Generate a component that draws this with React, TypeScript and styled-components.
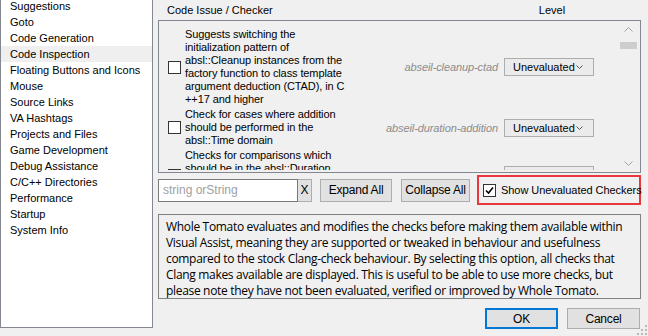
import React from 'react';
import styled, { createGlobalStyle } from 'styled-components';

const GlobalStyle = createGlobalStyle`
  html, body {
    margin: 0;
    padding: 0;
    background: #f0f0f0;
  }
  body {
    width: 648px;
    height: 336px;
    overflow: hidden;
    font-family: "Liberation Sans", Arial, sans-serif;
    font-size: 11px;
    color: #000;
  }
`;

const Page = styled.div`
  position: relative;
  display: flex;
  width: 648px;
  height: 336px;
  background: #f0f0f0;
`;

const NavList = styled.ul`
  list-style: none;
  margin: 0;
  padding: 0;
  width: 151px;
  height: 327px;
  flex: none;
  background: #fff;
  border: 1px solid #828790;
  border-top: none;
  overflow: hidden;
`;

const NavItems = styled.div`
  margin-top: -2px;
`;

const NavItem = styled.li<{ $active?: boolean }>`
  height: 16px;
  line-height: 16px;
  padding-left: 9px;
  white-space: nowrap;
  background: ${p => (p.$active ? '#efefef' : 'transparent')};
`;

const Main = styled.div`
  flex: 1;
  display: flex;
  flex-direction: column;
  padding: 0 7px 0 5px;
`;

const Header = styled.div`
  display: flex;
  align-items: center;
  height: 20px;
`;

const HeaderCell = styled.span<{ $width?: number }>`
  flex: ${p => (p.$width ? 'none' : '1')};
  width: ${p => (p.$width ? `${p.$width}px` : 'auto')};
  text-align: ${p => (p.$width ? 'center' : 'left')};
  padding-left: ${p => (p.$width ? '0' : '9px')};
  margin-right: ${p => (p.$width ? '44px' : '0')};
`;

const TableBox = styled.div`
  display: flex;
  align-items: flex-start;
  height: 151px;
  border: 1px solid #828790;
  overflow: hidden;
`;

const Rows = styled.div`
  flex: 1;
  box-sizing: border-box;
  height: 149px;
  padding: 6px 26px 0 0;
  overflow: hidden;
`;

const Row = styled.div`
  display: flex;
  align-items: center;
  padding: 1px 0;
`;

const Box = styled.span`
  flex: none;
  width: 11px;
  height: 11px;
  border: 1px solid #333;
  background: #fff;
  display: flex;
  align-items: center;
  justify-content: center;
`;

const RowBox = styled(Box)`
  margin-left: 9px;
`;

const IssueText = styled.div`
  width: 165px;
  margin-left: 4px;
  line-height: 13px;
  letter-spacing: -0.1px;
  white-space: nowrap;
`;

const CheckerName = styled.div`
  flex: 1;
  text-align: right;
  font-style: italic;
  color: #8c8c8c;
  padding-right: 6px;
  white-space: nowrap;
  letter-spacing: -0.1px;
`;

const Combo = styled.div`
  flex: none;
  box-sizing: border-box;
  width: 90px;
  height: 18px;
  border: 1px solid #adadad;
  background: #ebebeb;
  display: flex;
  align-items: center;
  justify-content: space-between;
  padding: 0 10px 0 8px;
`;

const ScrollBar = styled.div`
  flex: none;
  align-self: stretch;
  width: 17px;
  margin-right: 3px;
  display: flex;
  flex-direction: column;
  align-items: center;
`;

const Arrow = styled.div`
  height: 17px;
  display: flex;
  align-items: center;
  justify-content: center;
`;

const Thumb = styled.div`
  width: 17px;
  height: 7px;
  background: #cdcdcd;
  margin-top: 4px;
`;

const Track = styled.div`
  flex: 1;
  width: 100%;
  display: flex;
  flex-direction: column;
  align-items: center;
`;

const Toolbar = styled.div`
  display: flex;
  align-items: center;
  height: 30px;
  margin-top: 2px;
`;

const SearchInput = styled.div`
  box-sizing: border-box;
  width: 140px;
  height: 23px;
  border: 1px solid #7a7a7a;
  background: #fff;
  color: #a0a0a0;
  font-size: 12px;
  line-height: 21px;
  padding-left: 4px;
`;

const ClearButton = styled.div`
  width: 14px;
  height: 23px;
  box-sizing: border-box;
  border: 1px solid #adadad;
  border-left: none;
  background: #e1e1e1;
  display: flex;
  align-items: center;
  justify-content: center;
  font-size: 12px;
`;

const Button = styled.div<{ $width: number; $height?: number; $primary?: boolean; $gap?: number }>`
  width: ${p => p.$width}px;
  height: ${p => p.$height ?? 23}px;
  margin-left: ${p => p.$gap ?? 0}px;
  box-sizing: border-box;
  border: ${p => (p.$primary ? '2px solid #0078d7' : '1px solid #adadad')};
  background: #e1e1e1;
  display: flex;
  align-items: center;
  justify-content: center;
  font-size: 12px;
  letter-spacing: -0.2px;
`;

const Highlight = styled.div`
  display: flex;
  align-items: center;
  width: 164px;
  height: 30px;
  box-sizing: border-box;
  border: 2px solid #e8383d;
  margin-left: 7px;
  margin-right: -1px;
  padding-left: 4px;
  white-space: nowrap;
`;

const HighlightLabel = styled.span`
  margin-left: 5px;
  font-size: 11px;
  letter-spacing: -0.05px;
`;

const Description = styled.div`
  margin-top: 9px;
  height: 85px;
  box-sizing: border-box;
  border: 1px solid #828282;
  padding: 4px 0 0 7px;
  font-family: "Open Sans", "Noto Sans", sans-serif;
  font-size: 12px;
  line-height: 16px;
  letter-spacing: -0.32px;
  overflow: hidden;
`;

const DescLine = styled.div`
  white-space: nowrap;
`;

const Footer = styled.div`
  display: flex;
  justify-content: flex-end;
  gap: 9px;
  margin-top: 9px;
  padding-right: 1px;
`;

const Grip = styled.svg`
  position: absolute;
  right: 1px;
  bottom: 1px;
`;

const Chevron = ({ up, color = '#606060', w = 7, h = 4 }: { up?: boolean; color?: string; w?: number; h?: number }) => (
  <svg width={w} height={h} viewBox={`0 0 ${w} ${h}`}>
    <polyline
      points={up ? `0.5,${h - 0.5} ${w / 2},0.5 ${w - 0.5},${h - 0.5}` : `0.5,0.5 ${w / 2},${h - 0.5} ${w - 0.5},0.5`}
      fill="none"
      stroke={color}
      strokeWidth="1"
    />
  </svg>
);

const navItems = [
  'Suggestions',
  'Goto',
  'Code Generation',
  'Code Inspection',
  'Floating Buttons and Icons',
  'Mouse',
  'Source Links',
  'VA Hashtags',
  'Projects and Files',
  'Game Development',
  'Debug Assistance',
  'C/C++ Directories',
  'Performance',
  'Startup',
  'System Info',
];

const rows = [
  {
    lines: [
      'Suggests switching the',
      'initialization pattern of',
      'absl::Cleanup instances from the',
      'factory function to class template',
      'argument deduction (CTAD), in C',
      '++17 and higher',
    ],
    name: 'abseil-cleanup-ctad',
  },
  {
    lines: ['Check for cases where addition', 'should be performed in the', 'absl::Time domain'],
    name: 'abseil-duration-addition',
  },
  {
    lines: [
      'Checks for comparisons which',
      'should be in the absl::Duration',
      'domain instead of the floating',
      'point domain',
    ],
    name: 'abseil-duration-comparison',
  },
];

const description = [
  'Whole Tomato evaluates and modifies the checks before making them available within',
  'Visual Assist, meaning they are supported or tweaked in behaviour and usefulness',
  'compared to the stock Clang-check behaviour. By selecting this option, all checks that',
  'Clang makes available are displayed. This is useful to be able to use more checks, but',
  'please note they have not been evaluated, verified or improved by Whole Tomato.',
];

export default function App() {
  return (
    <>
      <GlobalStyle />
      <Page>
        <NavList>
          <NavItems>
            {navItems.map(item => (
              <NavItem key={item} $active={item === 'Code Inspection'}>
                {item}
              </NavItem>
            ))}
          </NavItems>
        </NavList>

        <Main>
          <Header>
            <HeaderCell>Code Issue / Checker</HeaderCell>
            <HeaderCell $width={90}>Level</HeaderCell>
          </Header>

          <TableBox>
            <Rows>
              {rows.map(row => (
                <Row key={row.name}>
                  <RowBox />
                  <IssueText>
                    {row.lines.map(l => (
                      <div key={l}>{l}</div>
                    ))}
                  </IssueText>
                  <CheckerName>{row.name}</CheckerName>
                  <Combo>
                    <span>Unevaluated</span>
                    <Chevron color="#555" w={7} h={4} />
                  </Combo>
                </Row>
              ))}
            </Rows>
            <ScrollBar>
              <Arrow>
                <Chevron up color="#a3a3a3" w={9} h={5} />
              </Arrow>
              <Track>
                <Thumb />
              </Track>
              <Arrow>
                <Chevron color="#a3a3a3" w={9} h={5} />
              </Arrow>
            </ScrollBar>
          </TableBox>

          <Toolbar>
            <SearchInput>string orString</SearchInput>
            <ClearButton>X</ClearButton>
            <Button $width={72} $gap={8}>Expand All</Button>
            <Button $width={69} $gap={9}>Collapse All</Button>
            <Highlight>
              <Box>
                <svg width="9" height="9" viewBox="0 0 9 9">
                  <polyline points="1,4.5 3.5,7 8,1.5" fill="none" stroke="#000" strokeWidth="1.6" />
                </svg>
              </Box>
              <HighlightLabel>Show Unevaluated Checkers</HighlightLabel>
            </Highlight>
          </Toolbar>

          <Description>
            {description.map(l => (
              <DescLine key={l}>{l}</DescLine>
            ))}
          </Description>

          <Footer>
            <Button $width={73} $height={21} $primary>OK</Button>
            <Button $width={73} $height={21}>Cancel</Button>
          </Footer>
        </Main>

        <Grip width="11" height="11" viewBox="0 0 11 11">
          {[
            [9, 1],
            [9, 5],
            [5, 5],
            [9, 9],
            [5, 9],
            [1, 9],
          ].map(([x, y]) => (
            <rect key={`${x}-${y}`} x={x} y={y} width="2" height="2" fill="#b8b8b8" />
          ))}
        </Grip>
      </Page>
    </>
  );
}
